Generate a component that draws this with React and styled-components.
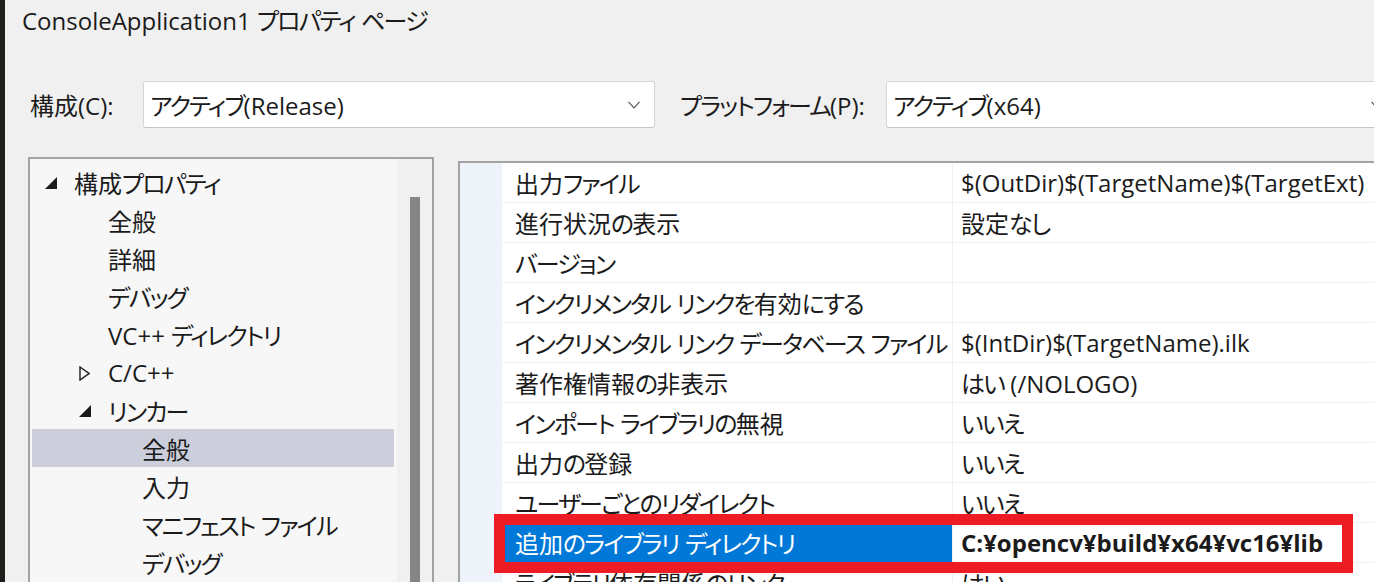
import React from "react";
import styled, { createGlobalStyle } from "styled-components";

const GlobalStyle = createGlobalStyle`
  html, body { margin: 0; padding: 0; }
  body {
    background: #1c1f1a;
    overflow: hidden;
    font-family: "Open Sans", "Noto Sans CJK JP", sans-serif;
  }
  #root { height: 582px; }
`;

const Jp = styled.span`
  font-family: "Noto Sans CJK JP", sans-serif;
  font-feature-settings: "palt" 1;
  letter-spacing: ${(p) => (p.$kana ? "-1.8px" : "0")};
`;

const classify = (ch) => {
  const c = ch.charCodeAt(0);
  if (c >= 0x3040 && c <= 0x30ff) return "k";
  if ((c >= 0x3000 && c < 0x3040) || (c >= 0x3400 && c <= 0x9fff) || (c >= 0xff00 && c <= 0xffef)) return "h";
  return "l";
};

const T = ({ children }) => {
  const s = String(children);
  const runs = [];
  for (const ch of s) {
    const t = classify(ch);
    const last = runs[runs.length - 1];
    if (last && last.t === t) last.s += ch;
    else runs.push({ t, s: ch });
  }
  return (
    <span>
      {runs.map((r, i) =>
        r.t === "l" ? (
          <React.Fragment key={i}>{r.s}</React.Fragment>
        ) : (
          <Jp key={i} $kana={r.t === "k"}>
            {r.s}
          </Jp>
        )
      )}
    </span>
  );
};

const Window = styled.div`
  margin-left: 5px;
  width: 1369px;
  height: 582px;
  background: #f0f0f0;
  overflow: hidden;
  display: flex;
  flex-direction: column;
  color: #1b1b1b;
  font-size: 24px;
`;

const Title = styled.div`
  height: 40px;
  line-height: 40px;
  padding-left: 17px;
  white-space: nowrap;
`;

const ConfigRow = styled.div`
  margin-top: 41px;
  height: 47px;
  display: flex;
  align-items: center;
  white-space: nowrap;
`;

const Label = styled.span`
  margin-left: ${(p) => p.$ml}px;
  width: ${(p) => p.$w}px;
  flex: none;
`;

const Combo = styled.div`
  flex: none;
  width: 512px;
  height: 47px;
  box-sizing: border-box;
  background: #ffffff;
  border: 1px solid #d6d6d6;
  border-bottom-color: #c4c4c4;
  border-radius: 3px;
  display: flex;
  align-items: center;
  padding-left: 6px;
  padding-right: 14px;
`;

const ComboText = styled.span`
  flex: 1;
`;

const Chevron = () => (
  <svg width="12" height="8" viewBox="0 0 12 8">
    <polyline points="0.5,0.8 6,6.8 11.5,0.8" fill="none" stroke="#5a5a5a" strokeWidth="1.2" />
  </svg>
);

const Panels = styled.div`
  margin-top: 29px;
  display: flex;
  align-items: flex-start;
  padding-left: 23px;
  gap: 24px;
  flex: 1;
  min-height: 0;
`;

const TreePanel = styled.div`
  flex: none;
  width: 406px;
  height: 520px;
  box-sizing: border-box;
  border: 2px solid #a3a3a3;
  display: flex;
  background: #f7f7f7;
`;

const Tree = styled.div`
  flex: 1;
  padding: 4px 3px 0 2px;
`;

const TreeRow = styled.div`
  height: 38px;
  display: flex;
  align-items: center;
  padding-left: ${(p) => 13 + p.$level * 34}px;
  background: ${(p) => (p.$selected ? "#cccedb" : "transparent")};
  white-space: nowrap;
`;

const IconSlot = styled.span`
  width: 29px;
  flex: none;
  display: flex;
  align-items: center;
  padding-top: 2px;
`;

const ScrollTrack = styled.div`
  flex: none;
  width: 35px;
  background: #f0f0f0;
  display: flex;
  justify-content: center;
  padding-top: 38px;
`;

const ScrollThumb = styled.div`
  width: 10px;
  height: 100%;
  background: #858585;
`;

const Expanded = () => (
  <svg width="12" height="12" viewBox="0 0 12 12">
    <polygon points="12,0 12,12 0,12" fill="#1b1b1b" />
  </svg>
);

const Collapsed = () => (
  <svg width="11" height="15" viewBox="0 0 11 15">
    <polygon points="1,1 10,7.5 1,14" fill="none" stroke="#1b1b1b" strokeWidth="1.4" />
  </svg>
);

const GridPanel = styled.div`
  flex: 1;
  min-width: 0;
  margin-top: 4px;
  height: 520px;
  box-sizing: border-box;
  border: 2px solid #a3a3a3;
  border-right: none;
  background: #ffffff;
  display: flex;
  overflow: hidden;
`;

const Gutter = styled.div`
  flex: none;
  width: 42px;
  background: #eef2f9;
`;

const Grid = styled.div`
  flex: 1;
  min-width: 0;
`;

const GridRow = styled.div`
  position: relative;
  display: flex;
  height: 40px;
  box-sizing: border-box;
  border-bottom: 1px solid #eef0f5;
  white-space: nowrap;
`;

const NameCell = styled.div`
  flex: none;
  width: 451px;
  box-sizing: border-box;
  padding-left: 13px;
  display: flex;
  align-items: center;
  border-right: 1px solid #eef0f5;
  background: ${(p) => (p.$selected ? "#0078d7" : "transparent")};
  color: ${(p) => (p.$selected ? "#ffffff" : "inherit")};
`;

const ValueCell = styled.div`
  flex: 1;
  padding-left: 8px;
  display: flex;
  align-items: center;
  overflow: hidden;
  font-weight: ${(p) => (p.$bold ? 700 : 400)};
`;

const Highlight = styled.div`
  position: absolute;
  left: -8px;
  top: -9px;
  width: 859px;
  height: 59px;
  box-sizing: border-box;
  border: 11px solid #ed1c24;
  z-index: 2;
  pointer-events: none;
`;

const treeItems = [
  { label: "構成プロパティ", level: 0, icon: "exp" },
  { label: "全般", level: 1 },
  { label: "詳細", level: 1 },
  { label: "デバッグ", level: 1 },
  { label: "VC++ ディレクトリ", level: 1 },
  { label: "C/C++", level: 1, icon: "col" },
  { label: "リンカー", level: 1, icon: "exp" },
  { label: "全般", level: 2, selected: true },
  { label: "入力", level: 2 },
  { label: "マニフェスト ファイル", level: 2 },
  { label: "デバッグ", level: 2 },
];

const rows = [
  ["出力ファイル", "$(OutDir)$(TargetName)$(TargetExt)"],
  ["進行状況の表示", "設定なし"],
  ["バージョン", ""],
  ["インクリメンタル リンクを有効にする", ""],
  ["インクリメンタル リンク データベース ファイル", "$(IntDir)$(TargetName).ilk"],
  ["著作権情報の非表示", "はい (/NOLOGO)"],
  ["インポート ライブラリの無視", "いいえ"],
  ["出力の登録", "いいえ"],
  ["ユーザーごとのリダイレクト", "いいえ"],
  ["追加のライブラリ ディレクトリ", "C:¥opencv¥build¥x64¥vc16¥lib", true],
  ["ライブラリ依存関係のリンク", "はい"],
];

export default function App() {
  return (
    <>
      <GlobalStyle />
      <Window>
        <Title>
          <T>ConsoleApplication1 プロパティ ページ</T>
        </Title>
        <ConfigRow>
          <Label $ml={25} $w={113}>
            <T>構成(C):</T>
          </Label>
          <Combo>
            <ComboText>
              <T>アクティブ(Release)</T>
            </ComboText>
            <Chevron />
          </Combo>
          <Label $ml={25} $w={206}>
            <T>プラットフォーム(P):</T>
          </Label>
          <Combo>
            <ComboText>
              <T>アクティブ(x64)</T>
            </ComboText>
            <Chevron />
          </Combo>
        </ConfigRow>
        <Panels>
          <TreePanel>
            <Tree>
              {treeItems.map((it, i) => (
                <TreeRow key={i} $level={it.level} $selected={it.selected}>
                  <IconSlot>
                    {it.icon === "exp" && <Expanded />}
                    {it.icon === "col" && <Collapsed />}
                  </IconSlot>
                  <T>{it.label}</T>
                </TreeRow>
              ))}
            </Tree>
            <ScrollTrack>
              <ScrollThumb />
            </ScrollTrack>
          </TreePanel>
          <GridPanel>
            <Gutter />
            <Grid>
              {rows.map(([name, value, sel], i) => (
                <GridRow key={i}>
                  <NameCell $selected={sel}>
                    <T>{name}</T>
                  </NameCell>
                  <ValueCell $bold={sel}>
                    <T>{value}</T>
                  </ValueCell>
                  {sel && <Highlight />}
                </GridRow>
              ))}
            </Grid>
          </GridPanel>
        </Panels>
      </Window>
    </>
  );
}
